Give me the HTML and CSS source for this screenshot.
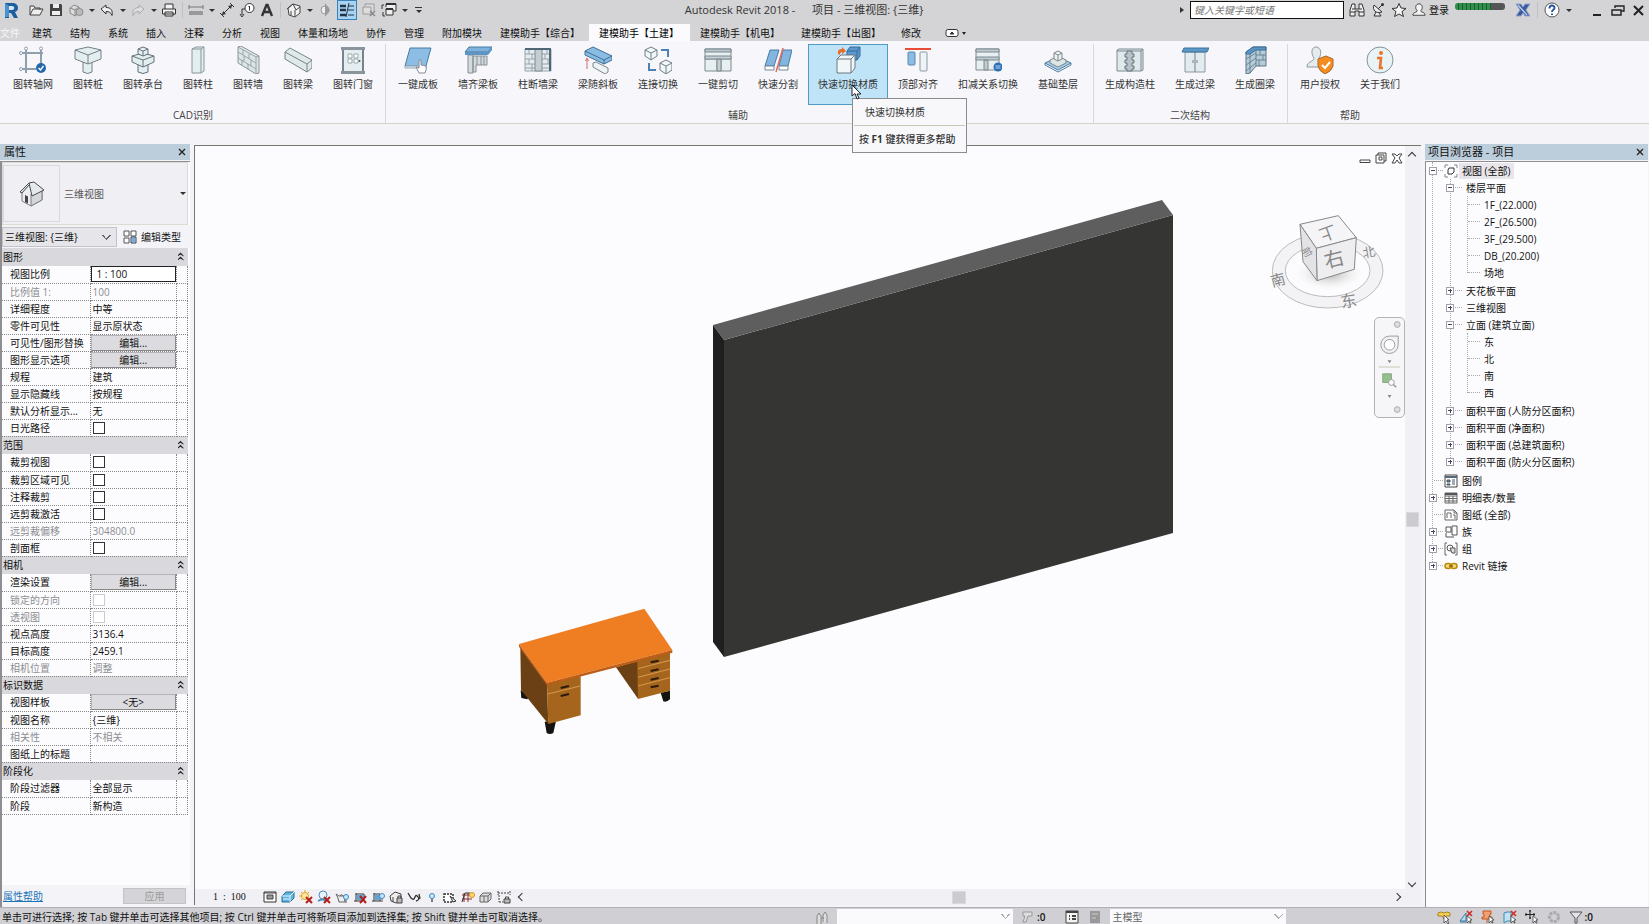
FILE: index.html
```html
<!DOCTYPE html>
<html lang="zh-CN">
<head>
<meta charset="utf-8">
<title>Autodesk Revit 2018 - 项目 - 三维视图: {三维}</title>
<link rel="stylesheet" href="styles.css">
</head>
<body>
<header class="titlebar">
  <div class="quick">
    <button class="ic logo" aria-label="Revit"><svg viewBox="0 0 16 16"><path d="M2 1h7c4 0 6 2 6 5 0 2-1 3-3 4l3 6h-4l-3-5H6v5H2z" fill="#1f5e9e"/><path d="M6 4v4h3c3 0 3-4 0-4z" fill="#d6e6f4"/><path d="M2 1l4 3v11H2z" fill="#4a92cf"/></svg></button>
    <button class="ic" aria-label="打开"><svg viewBox="0 0 16 16"><path d="M2 13V4h4l1 2h5v2M2 13l3-6h10l-3 6z" fill="#eee" stroke="#444"/></svg></button>
    <button class="ic" aria-label="保存"><svg viewBox="0 0 16 16"><path d="M2 2h11l1 1v11H2z" fill="#444"/><path d="M5 2h6v4H5zM4 9h8v4H4z" fill="#eee"/></svg></button>
    <button class="ic" aria-label="同步"><svg viewBox="0 0 16 16"><path d="M2 6l4-3 5 2v6l-4 3-5-3zM2 6l5 2 4-3M7 8v6" fill="#ddd" stroke="#888"/><circle cx="11.500" cy="10" r="3.500" fill="#bbb" stroke="#888"/></svg></button>
    <i class="caret"></i>
    <button class="ic" aria-label="放弃"><svg viewBox="0 0 16 16"><path d="M2 7l5-4v2.500c5 0 7 3 6 8-1-3-3-4-6-4V12z" fill="#eee" stroke="#333"/></svg></button>
    <i class="caret"></i>
    <button class="ic" aria-label="重做"><svg viewBox="0 0 16 16"><path d="M14 7L9 3v2.500c-5 0-7 3-6 8 1-3 3-4 6-4V12z" fill="#ddd" stroke="#aaa"/></svg></button>
    <i class="caret"></i>
    <button class="ic" aria-label="打印"><svg viewBox="0 0 16 16"><path d="M4 7V2h8v5M1.500 7h13v5h-13zM4 10h8v4H4z" fill="#f2f2f2" stroke="#333"/></svg></button>
    <i class="sep"></i>
    <button class="ic" aria-label="测量"><svg viewBox="0 0 16 16"><path d="M1 5h14M1 3v4M15 3v4" stroke="#777" fill="none"/><path d="M1 9h14v4H1z" fill="#999"/></svg></button>
    <i class="caret"></i>
    <button class="ic" aria-label="对齐尺寸标注"><svg viewBox="0 0 16 16"><path d="M3 13L13 3M1 11l4 4M11 1l4 4" stroke="#333" fill="none"/><path d="M3 13l1-4 3 3zM13 3l-1 4-3-3z" fill="#333"/></svg></button>
    <button class="ic" aria-label="按类别标记"><svg viewBox="0 0 16 16"><circle cx="10.500" cy="6" r="4.500" fill="#fff" stroke="#333"/><path d="M9.500 5l1-1v4.500M6 7H3v6M1 12l2 3 2-3" stroke="#333" fill="none"/></svg></button>
    <button class="ic" aria-label="文字"><svg viewBox="0 0 16 16"><path d="M3 14L7.500 3h1L13 14M5 10h6" fill="none" stroke="#333" stroke-width="2.400"/></svg></button>
    <i class="sep"></i>
    <button class="ic" aria-label="默认三维视图"><svg viewBox="0 0 16 16"><path d="M2 6l5-4 7 2v7l-5 4-6-2z" fill="#f2f2f2" stroke="#444"/><path d="M1 7l6-5 3 6M10 8l4-3M9 8v6M5 9v4" stroke="#444" fill="none"/></svg></button>
    <i class="caret"></i>
    <button class="ic" aria-label="剖面"><svg viewBox="0 0 16 16"><circle cx="8" cy="8" r="4" fill="#eee" stroke="#999"/><path d="M8 1v14l5-7z" fill="#999"/></svg></button>
    <button class="ic on" aria-label="细线"><svg viewBox="0 0 16 16"><path d="M1 4h6M1 8h6M1 13h6" stroke="#234" stroke-width="2.400"/><path d="M9 4h6M9 8h6M9 13h6M10 1L7 15" stroke="#234"/></svg></button>
    <button class="ic" aria-label="关闭隐藏窗口"><svg viewBox="0 0 16 16"><path d="M4 4V2h9v7M2 5h8v7H2z" fill="#ddd" stroke="#999"/><path d="M9 9l5 5M14 9l-5 5" stroke="#888" stroke-width="1.500"/></svg></button>
    <button class="ic" aria-label="切换窗口"><svg viewBox="0 0 16 16"><path d="M5 5V2h10v7h-3M5 7h7v6H5z" fill="#eee" stroke="#333"/><path d="M5 2h10M5 7h7" stroke="#333" stroke-width="2"/><path d="M1 7V3h2M2 10v4h2" stroke="#333" fill="none"/></svg></button>
    <i class="caret"></i>
    <i class="caret bar"></i>
  </div>
  <h1>Autodesk Revit 2018 - &emsp;&nbsp;项目 - 三维视图: {三维}</h1>
  <div class="account">
    <i class="caret right"></i>
    <input class="search" type="text" placeholder="键入关键字或短语" aria-label="搜索">
    <button class="ic" aria-label="查找"><svg viewBox="0 0 16 16"><path d="M3 2h3v5h4V2h3l2 6v6h-5V9H6v5H1V8zM3 7h3M10 7h3M1 10h5M10 10h5" fill="#eee" stroke="#333"/></svg></button>
    <button class="ic" aria-label="通讯中心"><svg viewBox="0 0 16 16"><path d="M4 3c-2 5 2 9 8 7zM8 7l4-4M6 10l-2 4h7l-2-3" fill="#eee" stroke="#333"/><circle cx="12.500" cy="2.500" r="1.500" fill="#333"/></svg></button>
    <button class="ic" aria-label="收藏夹"><svg viewBox="0 0 16 16"><path d="M8 1.500l2 4.500 5 .5-4 3 1.500 5L8 12l-4.500 2.500L5 9.500l-4-3L6 6z" fill="#f4f4f4" stroke="#333"/></svg></button>
    <button class="login"><svg viewBox="0 0 16 16"><path d="M6 9C3 6 4 1 8 1s5 5 2 8c0 2 5 1 5 5H1c0-4 5-3 5-5z" fill="#f4f4f4" stroke="#333"/></svg>登录</button>
    <span class="progress" role="img" aria-label="进度"></span>
    <button class="ic" aria-label="Exchange"><svg viewBox="0 0 16 16"><path d="M1 2h5l2 3 2-3h5l-4 6 4 6h-5l-2-3-2 3H1l4-6z" fill="#3c5a9a" stroke="#8ea3d0"/><path d="M3 3l9 10" stroke="#b9c8ea" stroke-width="1.500"/></svg></button>
    <i class="sep"></i>
    <button class="ic" aria-label="帮助"><svg viewBox="0 0 16 16"><circle cx="8" cy="8" r="7" fill="#fff" stroke="#555"/><path d="M5.500 6.500c0-4 5-3.500 5-.8C10.500 8 8 7.500 8 10M8 11.500v1.500" stroke="#2a55a0" stroke-width="2" fill="none"/></svg></button>
    <i class="caret"></i>
    <button class="ic win first" aria-label="最小化"><svg viewBox="0 0 16 16"><path d="M4 13h8" stroke="#222" stroke-width="2"/></svg></button>
    <button class="ic win" aria-label="还原"><svg viewBox="0 0 16 16"><path d="M5 6V4h9v5h-3M2 8h9v5H2z" fill="none" stroke="#222" stroke-width="1.400"/></svg></button>
    <button class="ic win" aria-label="关闭"><svg viewBox="0 0 16 16"><path d="M3 4l9 9M12 4l-9 9" stroke="#222" stroke-width="2"/></svg></button>
  </div>
</header>

<nav class="tabs">
  <button class="file">文件</button><button>建筑</button><button>结构</button><button>系统</button><button>插入</button><button>注释</button><button>分析</button><button>视图</button><button>体量和场地</button><button>协作</button><button>管理</button><button>附加模块</button><button>建模助手【综合】</button><button class="wide active">建模助手【土建】</button><button class="wide">建模助手【机电】</button><button class="wide">建模助手【出图】</button><button>修改</button>
  <button class="mini" aria-label="最小化功能区"><svg viewBox="0 0 22 10"><rect x="1" y="1.500" width="12" height="7" rx="2" fill="#fff" stroke="#333"/><path d="M5 6l2-2 2 2z" fill="#333" stroke="#333"/><path d="M17 4h4l-2 3z" fill="#222"/></svg></button>
</nav>

<section class="ribbon">
  <div class="group">
    <div class="tools">
      <button class="tool"><svg viewBox="0 0 28 28"><g stroke="#8fa0aa" stroke-width="2" fill="#fff"><path d="M7 2v25M22 2v16M2 7h22M2 23h15"/><circle cx="7" cy="2.500" r="1.500" stroke-width="1"/><circle cx="22" cy="2.500" r="1.500" stroke-width="1"/><circle cx="2" cy="7" r="1.500" stroke-width="1"/><circle cx="2" cy="23" r="1.500" stroke-width="1"/></g><circle cx="22" cy="22" r="5" fill="#2468ac"/><path d="M19.500 22l2 2 3-4" stroke="#fff" stroke-width="1.400" fill="none"/></svg>图转轴网</button>
      <button class="tool"><svg viewBox="0 0 28 28"><g fill="#e3eef0" stroke="#748086"><path d="M9 16v10q5 3 9 0V16z"/><path d="M1 4l13-3 13 3v9l-13 5L1 13z"/><path d="M1 4l13 5 13-5M14 9v9" fill="none"/></g></svg>图转桩</button>
      <button class="tool"><svg viewBox="0 0 28 28"><g fill="#e3eef0" stroke="#65727a"><path d="M9 17v9q5 3 10 0v-9z"/><path d="M3 10l11-3 11 3v6l-11 5-11-5z"/><path d="M3 10l11 4 11-4M14 14v7" fill="none"/><path d="M9 3l5-2 5 2v5l-5 2-5-2zM9 3l5 2 5-2M14 5v5"/></g></svg>图转承台</button>
      <button class="tool"><svg viewBox="0 0 28 28"><g fill="#e3eef0" stroke="#89959b"><path d="M8 3l4-2h8v24l-3 2H8z"/><path d="M8 3h9l3-2M17 3v24" fill="none"/></g></svg>图转柱</button>
      <button class="tool"><svg viewBox="0 0 28 28"><g fill="#dce6e8" stroke="#89959b"><path d="M4 1l3-1 18 10v17l-3 1L4 17z"/><path d="M4 1l18 10v17M22 11l3-1M4 6l18 11M4 12l18 11M9 4v5M15 8v5M10 10v5M17 14v6M8 14v5M14 18v5" fill="none" stroke-width=".8"/></g></svg>图转墙</button>
      <button class="tool"><svg viewBox="0 0 28 28"><g fill="#dfe9ea" stroke="#76848a"><path d="M1 6l5-4 22 12v8l-5 4L1 13z"/><path d="M1 6l22 12 5-4M23 18v8" fill="none"/></g></svg>图转梁</button>
      <button class="tool"><svg viewBox="0 0 28 28"><path d="M4 3h20v23H4z" fill="#e6edf0" stroke="#76848e" stroke-width="2"/><path d="M2 1h24v3H2zM2 25h24v3H2z" fill="#8a949c"/><path d="M9 8h4v4H9zM15 8h4v4h-4zM9 13h4v4H9zM15 13h4v4h-4z" fill="#fff" stroke="#9aa"/><circle cx="20.500" cy="15" r="1" fill="#456"/></svg>图转门窗</button>
    </div>
    <div class="label">CAD识别</div>
  </div>
  <div class="group assist">
    <div class="tools">
      <button class="tool"><svg viewBox="0 0 28 28"><path d="M6 2h21l-5 18H1z" fill="#8cbde4" stroke="#4a7aa0"/><path d="M1 20h21v2H1z" fill="#dfe9ee" stroke="#9ab"/><path d="M15 14q2-1 2 1v4l5 1q1 3-1 7h-6l-3-6 3 1z" fill="#fff" stroke="#889"/></svg>一键成板</button>
      <button class="tool"><svg viewBox="0 0 28 28"><path d="M4 9h5v18H4zM9 10h14v9H12v7H9z" fill="#d5dadd" stroke="#869098"/><path d="M13 10v9M17 10v9M20 10v9" stroke="#869098"/><path d="M5 1h23l-4 5H1z" fill="#7db2de" stroke="#4a7aa0"/><path d="M1 6h23l4-5v3l-4 5H1z" fill="#5d94c4"/></svg>墙齐梁板</button>
      <button class="tool"><svg viewBox="0 0 28 28"><path d="M1 3h26v22H1z" fill="#e4ecef" stroke="#98a4aa"/><path d="M1 8h26M1 13h26M1 18h26M1 22h26M5 3v5M8 8v5M5 13v5M23 3v5M21 8v5M24 13v5M8 18v7" stroke="#98a4aa"/><path d="M11 3h7v22h-7z" fill="#c3cdd2" stroke="#7f8c93"/><path d="M1 3h26M26 3v22" stroke="#4f6878" stroke-width="2"/></svg>柱断墙梁</button>
      <button class="tool"><svg viewBox="0 0 28 28"><path d="M1 5l8-4 19 9v4l-8 4L1 9z" fill="#8abbe2" stroke="#3f6f96"/><path d="M1 5l19 9 8-4M20 14v4" fill="none" stroke="#3f6f96"/><path d="M9 17l3-1 12 6v4l-3 2-12-7z" fill="#eef3f4" stroke="#77858c"/><path d="M3 23V13M1.500 15L3 12l1.500 3" stroke="#d36a6a" fill="none"/></svg>梁随斜板</button>
      <button class="tool"><svg viewBox="0 0 28 28"><g fill="#f2f6f7" stroke="#6f7f88"><path d="M1 4l6-3 6 3v6l-6 4-6-4zM1 4l6 3 6-3M7 7v7"/><path d="M16 17l6-3 6 3v7l-6 4-6-4zM16 17l6 3 6-3M22 20v8"/></g><path d="M17 4h7v7M5 17v7h7" stroke="#4c81b4" stroke-width="2" fill="none"/></svg>连接切换</button>
      <button class="tool"><svg viewBox="0 0 28 28"><path d="M1 3h26v22H1z" fill="#e8eff1" stroke="#7c8a91"/><path d="M1 3h26v3H1z" fill="#b8c5cb" stroke="#7c8a91"/><path d="M1 13h26M13 13v12M17 13v12" stroke="#7c8a91"/><path d="M1 10h26v3H1zM13 13h4v12h-4z" fill="#c5cfd4" stroke="#7c8a91"/></svg>一键剪切</button>
      <button class="tool"><svg viewBox="0 0 28 28"><path d="M6 4h9l-5 16H1zM19 4h9l-4 16h-9z" fill="#82b5df" stroke="#4a7ba4"/><path d="M1 20h9v4H1zM15 20h9v4h-9z" fill="#fff" stroke="#789"/><path d="M19 2l-7 24" stroke="#df6d5c" stroke-width="1.500"/></svg>快速分割</button>
      <div class="hot">
        <button class="tool selected"><svg viewBox="0 0 28 28"><path d="M13 5l3-4h10v9l-3 4H13z" fill="#5d98ce" stroke="#376a98"/><path d="M13 5h10l3-4M23 5v9" fill="none" stroke="#376a98"/><path d="M3 13l4-4h14v13l-4 5H3z" fill="#f1f6f8" stroke="#6b7a82"/><path d="M3 13h14l4-4M17 13v14" fill="none" stroke="#6b7a82"/><path d="M4 8q-1-5 4-5V1l4 4-4 3V6q-2 0-2 3z" fill="#ea6b2a"/></svg>快速切换材质</button>
        <div class="tooltip" role="tooltip"><p>快速切换材质</p><p class="f1">按 <b>F1</b> 键获得更多帮助</p></div>
        <svg class="cursor" viewBox="0 0 11 16"><path d="M1 1v11l3-2.500L6 15l2-1-2-4h4z" fill="#fff" stroke="#222"/></svg>
      </div>
      <button class="tool"><svg viewBox="0 0 28 28"><path d="M1 3h26" stroke="#e84b36" stroke-width="2"/><rect x="4" y="6" width="7" height="13" rx="1" fill="#8bbce4" stroke="#5b88ac"/><rect x="16" y="6" width="7" height="19" rx="1" fill="#eef3f6" stroke="#8998a2"/></svg>顶部对齐</button>
      <button class="tool"><svg viewBox="0 0 28 28"><path d="M2 3h23v21H2z" fill="#e8eff1" stroke="#7c8a91"/><path d="M2 3h23v3H2zM2 11h23v3H2zM10 14h4v10h-4z" fill="#c0cbd0" stroke="#7c8a91"/><circle cx="24" cy="21" r="4.500" fill="#2c6fb4"/><path d="M21.500 20h5M21.500 22h5" stroke="#b9d5ef"/></svg>扣减关系切换</button>
      <button class="tool"><svg viewBox="0 0 28 28"><path d="M1 17l13-6 13 6-13 7z" fill="#a8cbe4" stroke="#4f7fa4"/><path d="M1 17v2l13 7 13-7v-2" fill="none" stroke="#4f7fa4"/><path d="M6 14l8-4 8 4v3l-8 4-8-4z" fill="#dfe5e6" stroke="#7b888e"/><path d="M10 7l4-2 4 2v6l-4 2-4-2zM10 7l4 2 4-2M14 9v6" fill="#eef1f1" stroke="#7b888e"/></svg>基础垫层</button>
    </div>
    <div class="label">辅助</div>
  </div>
  <div class="group second">
    <div class="tools">
      <button class="tool"><svg viewBox="0 0 28 28"><path d="M1 4l2-1h24v21l-2 1H1z" fill="#dfe8eb" stroke="#7c8a91"/><path d="M1 5h24v20M25 5l2-2" fill="none" stroke="#7c8a91"/><path d="M11 5h5v3h2v3h-2v3h2v3h-2v3h2v3h-2v2h-5v-2H9v-3h2v-3H9v-3h2v-3H9V8h2z" fill="#b6c2c8" stroke="#66747c"/></svg>生成构造柱</button>
      <button class="tool"><svg viewBox="0 0 28 28"><path d="M4 6h20v20H4z" fill="#e2ecef" stroke="#8b989e"/><path d="M14 6v20M12 14v3M16 14v3" stroke="#71808a"/><path d="M3 2h25l-2 4H1z" fill="#5b98c8" stroke="#3b7098"/></svg>生成过梁</button>
      <button class="tool"><svg viewBox="0 0 28 28"><path d="M5 6l7-5h13v19H15l-6 7-4 1z" fill="#b6ccd8" stroke="#5c7486"/><path d="M5 6l7-5h13v3H15L9 8H5z" fill="#5a94c2" stroke="#3b7098"/><path d="M15 4v16M9 8v19M15 9h10M15 14h10M5 13l10-6M5 19l10-7M5 25l10-8M19 4v5M22 9v5M18 14v6" stroke="#5c7486" fill="none" stroke-width=".8"/></svg>生成圈梁</button>
    </div>
    <div class="label">二次结构</div>
  </div>
  <div class="group last">
    <div class="tools">
      <button class="tool"><svg viewBox="0 0 28 28"><path d="M8 12C5 8 5 1 10 1s6 7 3 11c0 3 5 3 5 9H1c0-6 7-5 7-9z" fill="#e6ecee" stroke="#8d999f"/><path d="M12 13l8-3 7 3v7q-1 5-8 8-6-3-7-8z" fill="#f48c1e" stroke="#a5672e"/><path d="M16 19l3 3 5-6" stroke="#fff" stroke-width="2" fill="none"/></svg>用户授权</button>
      <button class="tool"><svg viewBox="0 0 28 28"><circle cx="14" cy="14" r="13" fill="#e9f2f4" stroke="#84939b"/><circle cx="15" cy="7" r="2" fill="#e9752b"/><path d="M11 12h4l-1 10h3" stroke="#e9752b" stroke-width="2.600" fill="none"/></svg>关于我们</button>
    </div>
    <div class="label">帮助</div>
  </div>
</section>
<div class="options"></div>

<main class="work">
  <aside class="props">
    <div class="ptitle">属性<button aria-label="关闭"><svg viewBox="0 0 8 8"><path d="M1 1l6 6M7 1L1 7" stroke="#222" stroke-width="1.300"/></svg></button></div>
    <div class="pbody">
      <button class="type">
        <span class="thumb"><svg viewBox="0 0 26 28"><path d="M3 12l8-9 12 6v11l-11 6-9-5z" fill="#ededf0" stroke="#7a7f84"/><path d="M12 14v12l11-6V9z" fill="#d4d7da" stroke="#7a7f84"/><path d="M10 3l5-1 10 8-12 6z" fill="#e6e9ec" stroke="#454b50"/><path d="M10 3L1 12l2 1 7-8" fill="#e6e9ec" stroke="#454b50"/><path d="M6 15l3 1.500v7L6 22z" fill="#444"/></svg></span>
        <span class="tname">三维视图</span><i class="caret"></i>
      </button>
      <div class="inst">
        <select aria-label="实例"><option>三维视图: {三维}</option></select>
        <button class="edit"><svg viewBox="0 0 14 14"><path d="M1 1h5v5H1zM8 1h5v5H8zM1 8h5v5H1z" fill="#fff" stroke="#555"/><path d="M8 7h5v6H8z" fill="#cfe0f2" stroke="#345"/><path d="M9 9h3M9 11h3" stroke="#27c"/></svg>编辑类型</button>
      </div>
      <table class="grid">
        <colgroup><col class="c1"><col><col class="c3"></colgroup>
        <tbody>
        <tr class="h"><th colspan="3"><span>图形</span><button aria-label="折叠图形"></button></th></tr>
        <tr><th>视图比例</th><td><input class="scale" type="text" value="1 : 100" aria-label="视图比例"></td><td></td></tr>
        <tr class="off"><th>比例值 1:</th><td>100</td><td></td></tr>
        <tr><th>详细程度</th><td>中等</td><td></td></tr>
        <tr><th>零件可见性</th><td>显示原状态</td><td></td></tr>
        <tr><th>可见性/图形替换</th><td><button class="cell">编辑...</button></td><td></td></tr>
        <tr><th>图形显示选项</th><td><button class="cell">编辑...</button></td><td></td></tr>
        <tr><th>规程</th><td>建筑</td><td></td></tr>
        <tr><th>显示隐藏线</th><td>按规程</td><td></td></tr>
        <tr><th>默认分析显示...</th><td>无</td><td></td></tr>
        <tr><th><label for="k1">日光路径</label></th><td><input type="checkbox" id="k1"></td><td></td></tr>
        <tr class="h"><th colspan="3"><span>范围</span><button aria-label="折叠范围"></button></th></tr>
        <tr><th><label for="k2">裁剪视图</label></th><td><input type="checkbox" id="k2"></td><td></td></tr>
        <tr><th><label for="k3">裁剪区域可见</label></th><td><input type="checkbox" id="k3"></td><td></td></tr>
        <tr><th><label for="k4">注释裁剪</label></th><td><input type="checkbox" id="k4"></td><td></td></tr>
        <tr><th><label for="k5">远剪裁激活</label></th><td><input type="checkbox" id="k5"></td><td></td></tr>
        <tr class="off"><th>远剪裁偏移</th><td>304800.0</td><td></td></tr>
        <tr><th><label for="k6">剖面框</label></th><td><input type="checkbox" id="k6"></td><td></td></tr>
        <tr class="h"><th colspan="3"><span>相机</span><button aria-label="折叠相机"></button></th></tr>
        <tr><th>渲染设置</th><td><button class="cell">编辑...</button></td><td></td></tr>
        <tr class="off"><th><label for="k7">锁定的方向</label></th><td><input type="checkbox" id="k7" disabled></td><td></td></tr>
        <tr class="off"><th><label for="k8">透视图</label></th><td><input type="checkbox" id="k8" disabled></td><td></td></tr>
        <tr><th>视点高度</th><td>3136.4</td><td></td></tr>
        <tr><th>目标高度</th><td>2459.1</td><td></td></tr>
        <tr class="off"><th>相机位置</th><td>调整</td><td></td></tr>
        <tr class="h"><th colspan="3"><span>标识数据</span><button aria-label="折叠标识数据"></button></th></tr>
        <tr><th>视图样板</th><td><button class="cell">&lt;无&gt;</button></td><td></td></tr>
        <tr><th>视图名称</th><td>{三维}</td><td></td></tr>
        <tr class="off"><th>相关性</th><td>不相关</td><td></td></tr>
        <tr><th>图纸上的标题</th><td></td><td></td></tr>
        <tr class="h"><th colspan="3"><span>阶段化</span><button aria-label="折叠阶段化"></button></th></tr>
        <tr><th>阶段过滤器</th><td>全部显示</td><td></td></tr>
        <tr><th>阶段</th><td>新构造</td><td></td></tr>
        </tbody>
      </table>
    </div>
    <div class="pfoot"><a href="#help">属性帮助</a><button disabled>应用</button></div>
  </aside>

  <section class="view">
    <div class="canvas">
      <svg class="scene" viewBox="195 146 1210 743" preserveAspectRatio="xMinYMin meet">
        <defs><radialGradient id="sh"><stop offset="0" stop-color="#999" stop-opacity=".8"/><stop offset="1" stop-color="#fff" stop-opacity="0"/></radialGradient></defs>
        <path d="M724 340L1173 215V533L724 657z" fill="#353533"/>
        <path d="M713 325L1162 200l11 15L724 340z" fill="#5e5e5e"/>
        <path d="M713 325l11 15v317l-11-15z" fill="#1f1f1f"/>
        <g transform="translate(500 590) scale(.3333)">
          <path d="M62 300l25 20-5 8-18-4zM134 395l34-2-8 36q-10 6-20 0zM482 308l28-6v26q-10 10-20 6z" fill="#15130f"/>
          <path d="M61 172l80 108 4 122-82-102z" fill="#6b4014"/>
          <path d="M141 282l101-24v118l-97 26z" fill="#a5651d"/>
          <path d="M348 232l66-20v114z" fill="#6b4014"/>
          <path d="M412 212l98-26v116l-96 25z" fill="#a5651d"/>
          <path d="M143 312l98-24M414 236l96-25M414 262l96-25M414 288l96-25" stroke="#d79a4e" stroke-width="3"/>
          <path d="M182 294l25-6M182 318l25-6M452 217l24-5M452 243l24-5M452 269l24-5M452 292l24-5" stroke="#2a1a0c" stroke-width="6"/>
          <path d="M57 162L433 56l84 124-376 98z" fill="#ef7d22"/>
          <path d="M57 162l84 116 376-98v8l-376 98L57 170z" fill="#bd5d16"/>
        </g>
        <g transform="translate(1240 150) scale(.3333)">
          <path fill-rule="evenodd" d="M97 362a166 112 0 1 0 332 0a166 112 0 1 0-332 0zM136 362a127 78 0 1 0 254 0a127 78 0 1 0-254 0z" fill="#f3f3f6" stroke="#bbb" stroke-width="3"/>
          <ellipse cx="268" cy="370" rx="110" ry="55" fill="url(#sh)"/>
          <g stroke="#888" stroke-width="3" stroke-linejoin="round"><path d="M180 223l115-26 54 66-120 32z" fill="#f5f5f7"/><path d="M229 295l120-32-6 95-112 34z" fill="#eeeef1"/><path d="M180 223l49 72 2 97-42-57z" fill="#e3e3e7"/></g>
          <g fill="#888" font-size="50"><text x="252" y="348" transform="rotate(-14 282 328)" font-size="60">右</text><text x="236" y="268" transform="rotate(160 262 250)">上</text><text x="190" y="318" transform="rotate(60 204 304)" font-size="30">前</text><text x="92" y="406" transform="rotate(-15 114 390)" font-size="44">南</text><text x="302" y="470" transform="rotate(-10 328 452)" font-size="48">东</text><text x="368" y="320" transform="rotate(-10 390 306)" font-size="38">北</text></g>
        </g>
      </svg>
      <div class="mdi">
        <button aria-label="最小化视图"><svg viewBox="0 0 12 12"><path d="M1 8h10v2.500H1z" fill="#fff" stroke="#444"/></svg></button>
        <button aria-label="还原视图"><svg viewBox="0 0 12 12"><path d="M3 3V1h8v8H9M1 3h8v8H1z" fill="#fff" stroke="#444"/><path d="M4 5h3v3H4z" fill="none" stroke="#444"/></svg></button>
        <button aria-label="关闭视图"><svg viewBox="0 0 12 12"><path d="M1 2h3l2 2 2-2h3L8 6l3 5H8L6 8l-2 3H1l3-5z" fill="#fff" stroke="#444"/></svg></button>
      </div>
      <div class="navbar">
        <svg viewBox="0 0 30 101"><g fill="none" stroke="#aaa"><circle cx="23" cy="6" r="3" fill="#ddd"/><circle cx="23" cy="94" r="3" fill="#ddd"/><path d="M15 18h9v9a9 9 0 1 1-9-9z" fill="#f2f2f4" stroke="#999"/><circle cx="15" cy="27" r="5.500" fill="#fff" stroke="#999"/><path d="M4 50h22" stroke="#c8c8b4"/></g><path d="M13 43h4l-2 3zM13 79h4l-2 3z" fill="#888"/><path d="M8 57h9v9H8z" fill="#94c08e" stroke="#86a882"/><circle cx="17" cy="66" r="3" fill="#fff" stroke="#999"/><path d="M19 68l3 3" stroke="#999" stroke-width="1.500"/></svg>
      </div>
    </div>
    <div class="vscroll"><i class="chev up"></i><i class="thumb"></i><i class="chev down"></i></div>
    <div class="vcb">
      <span class="sc">1&ensp;:&ensp;100</span>
      <div class="vicons">
        <button aria-label="详细程度"><svg viewBox="0 0 14 14"><path d="M1 2h12v10H1z" fill="#fff" stroke="#333"/><path d="M1 3h12M4 5h6v4H4z" fill="#999" stroke="#444"/></svg></button>
        <button aria-label="视觉样式"><svg viewBox="0 0 14 14"><path d="M1 6l4-4h8v6l-4 4H1z" fill="#5fb4e0" stroke="#2a6a90"/><path d="M1 6h8l4-4M9 6v6M2 9h6" fill="none" stroke="#e8f6ff"/></svg></button>
        <button aria-label="日光路径"><svg viewBox="0 0 14 14"><circle cx="6" cy="6" r="3.500" fill="#ffe9a0" stroke="#e0a020"/><path d="M6 0v2M0 6h2M2 2l1 1M2 10l1-1M10 2L9 3" stroke="#e0a020"/><path d="M7 7l6 6M13 7l-6 6" stroke="#b3201c" stroke-width="2"/></svg></button>
        <button aria-label="阴影"><svg viewBox="0 0 14 14"><circle cx="6" cy="5" r="4" fill="#e8f4fc" stroke="#4a8dbb"/><path d="M1 11q5-3 8 0" stroke="#4a8dbb" stroke-width="2" fill="none"/><path d="M7 7l6 6M13 7l-6 6" stroke="#b3201c" stroke-width="2"/></svg></button>
        <button aria-label="渲染"><svg viewBox="0 0 14 14"><path d="M1 4l3 2h5l1 6H4L3 8zM5 6q1-3 3 0" fill="#eee" stroke="#666"/><circle cx="11" cy="7" r="2.500" fill="#c8e6fa" stroke="#3c8cc4"/><path d="M11 10v3" stroke="#555"/></svg></button>
        <button aria-label="裁剪视图"><svg viewBox="0 0 14 14"><path d="M1 11h9M3 3v8M3 4h8v7" fill="none" stroke="#333"/><path d="M4 5h7v5H4z" fill="#58a6dc"/><path d="M7 6l6 7M13 6l-6 7" stroke="#b3201c" stroke-width="2"/></svg></button>
        <button aria-label="显示裁剪区域"><svg viewBox="0 0 14 14"><path d="M1 11h9M3 3v8M3 4h6v7" fill="none" stroke="#333"/><path d="M4 5h4v5H4z" fill="#58a6dc"/><circle cx="11" cy="6" r="2.500" fill="#c8e6fa" stroke="#3c8cc4"/><path d="M11 9v3" stroke="#555"/></svg></button>
        <button aria-label="锁定三维视图"><svg viewBox="0 0 14 14"><path d="M1 6l5-4 6 2v7l-5 2-5-2zM4 12V7" fill="#eee" stroke="#444"/><path d="M8 8h5v5H8z" fill="#bbb" stroke="#444"/><path d="M9 8V6h3v2" fill="none" stroke="#444"/></svg></button>
        <button aria-label="临时隐藏"><svg viewBox="0 0 14 14"><path d="M1 3l3 5q3 3 4-1 1-3 3 0t-2 4M12 4l1 5" fill="none" stroke="#333" stroke-width="1.300"/></svg></button>
        <button aria-label="显示隐藏图元"><svg viewBox="0 0 14 14"><circle cx="7" cy="6" r="2.500" fill="#c8e6fa" stroke="#3c8cc4"/><path d="M7 9v3" stroke="#555" stroke-width="1.500"/></svg></button>
        <button aria-label="临时视图属性"><svg viewBox="0 0 14 14"><path d="M1 4h9v8H1z" fill="#fff" stroke="#333" stroke-width="1.500" stroke-dasharray="2 1"/><path d="M7 6l6 5-3 1z" fill="#fff" stroke="#333"/></svg></button>
        <button aria-label="分析模型"><svg viewBox="0 0 14 14"><path d="M1 5h10M1 9h10M3 3v9M7 3v9" stroke="#8b2f2a" fill="none"/><path d="M1 12l3-9h5" stroke="#333" fill="none"/><circle cx="11" cy="5" r="2.500" fill="#ffd873" stroke="#dd9420"/></svg></button>
        <button aria-label="位移集"><svg viewBox="0 0 14 14"><path d="M1 6l3-3h8v6l-3 3H1zM1 6h8v6M9 6l3-3M5 6v6" fill="#ddd" stroke="#666"/></svg></button>
        <button aria-label="约束"><svg viewBox="0 0 14 14"><path d="M1 3h12M1 1v4M13 1v4M2 5v7M2 12h4" stroke="#444" stroke-dasharray="2 1" fill="none"/><path d="M7 9h6v4H7z" fill="#bbb" stroke="#444"/><path d="M8.500 9V7h3v2" stroke="#444" fill="none"/></svg></button>
        <i class="chev left"></i>
      </div>
      <div class="hscroll"><i class="thumb"></i><i class="chev rightward"></i></div>
    </div>
  </section>

  <aside class="browser">
    <div class="ptitle">项目浏览器 - 项目<button aria-label="关闭"><svg viewBox="0 0 8 8"><path d="M1 1l6 6M7 1L1 7" stroke="#222" stroke-width="1.300"/></svg></button></div>
    <div class="tbody">
      <ul class="l1">
        <li><div class="row"><button class="exp" aria-label="折叠"></button><i class="dash"></i><svg viewBox="0 0 14 14"><path d="M4 1H1v3M10 1h3v3M4 13H1v-3M10 13h3v-3" fill="none" stroke="#888"/><path d="M5 4h5v4l-2 2H4V6z" fill="#fff" stroke="#333"/></svg><span class="cur">视图 (全部)</span></div>
          <ul class="l2">
            <li><div class="row"><button class="exp" aria-label="折叠"></button><i class="dash"></i><span>楼层平面</span></div>
              <ul class="l3"><li><div class="row"><i class="dash"></i><span>1F_(22.000)</span></div></li><li><div class="row"><i class="dash"></i><span>2F_(26.500)</span></div></li><li><div class="row"><i class="dash"></i><span>3F_(29.500)</span></div></li><li><div class="row"><i class="dash"></i><span>DB_(20.200)</span></div></li><li><div class="row"><i class="dash"></i><span>场地</span></div></li></ul></li>
            <li><div class="row"><button class="exp plus" aria-label="展开"></button><i class="dash"></i><span>天花板平面</span></div></li>
            <li><div class="row"><button class="exp plus" aria-label="展开"></button><i class="dash"></i><span>三维视图</span></div></li>
            <li><div class="row"><button class="exp" aria-label="折叠"></button><i class="dash"></i><span>立面 (建筑立面)</span></div>
              <ul class="l3"><li><div class="row"><i class="dash"></i><span>东</span></div></li><li><div class="row"><i class="dash"></i><span>北</span></div></li><li><div class="row"><i class="dash"></i><span>南</span></div></li><li><div class="row"><i class="dash"></i><span>西</span></div></li></ul></li>
            <li><div class="row"><button class="exp plus" aria-label="展开"></button><i class="dash"></i><span>面积平面 (人防分区面积)</span></div></li>
            <li><div class="row"><button class="exp plus" aria-label="展开"></button><i class="dash"></i><span>面积平面 (净面积)</span></div></li>
            <li><div class="row"><button class="exp plus" aria-label="展开"></button><i class="dash"></i><span>面积平面 (总建筑面积)</span></div></li>
            <li><div class="row"><button class="exp plus" aria-label="展开"></button><i class="dash"></i><span>面积平面 (防火分区面积)</span></div></li>
          </ul></li>
        <li><div class="row leaf"><i class="dash"></i><svg viewBox="0 0 14 14"><path d="M1 1h12v12H1z" fill="#fff" stroke="#444"/><path d="M1 2h12v2H1z" fill="#567"/><path d="M3 6h3v2H3zM3 10h3v1H3zM8 6h3M8 8h3M8 10h3" fill="#789" stroke="#456"/></svg><span>图例</span></div></li>
        <li><div class="row"><button class="exp plus" aria-label="展开"></button><i class="dash"></i><svg viewBox="0 0 14 14"><path d="M1 2h12v10H1zM1 5h12M1 7.500h12M1 10h12M5 5v7M9 5v7" fill="#fff" stroke="#666"/><path d="M1 2h12v2H1z" fill="#555"/></svg><span>明细表/数量</span></div></li>
        <li><div class="row leaf"><i class="dash"></i><svg viewBox="0 0 14 14"><path d="M1 2h9l3 3v7H1z" fill="#fff" stroke="#666"/><path d="M3 10V5h4v5M9 7h2v4M10 2v3h3" fill="none" stroke="#666"/></svg><span>图纸 (全部)</span></div></li>
        <li><div class="row"><button class="exp plus" aria-label="展开"></button><i class="dash"></i><svg viewBox="0 0 14 14"><path d="M2 2h5v5H2zM8 1h5v9H8zM2 8v4h8" fill="#fff" stroke="#555"/></svg><span>族</span></div></li>
        <li><div class="row"><button class="exp plus" aria-label="展开"></button><i class="dash"></i><svg viewBox="0 0 14 14"><path d="M3 1H1v12h2M11 1h2v12h-2" fill="none" stroke="#666"/><circle cx="6" cy="6" r="3" fill="#fff" stroke="#555"/><path d="M6 6h5v5H8z" fill="#ddd" stroke="#555"/></svg><span>组</span></div></li>
        <li><div class="row"><button class="exp plus" aria-label="展开"></button><i class="dash"></i><svg viewBox="0 0 14 14"><rect x="1" y="4.500" width="6" height="5" rx="2.500" fill="#f6d77a" stroke="#b88a10" stroke-width="1.500"/><rect x="7" y="4.500" width="6" height="5" rx="2.500" fill="#f6d77a" stroke="#b88a10" stroke-width="1.500"/><path d="M5 7h4" stroke="#8a6608" stroke-width="1.500"/></svg><span>Revit 链接</span></div></li>
      </ul>
    </div>
  </aside>
</main>

<footer class="status">
  <p>单击可进行选择; 按 Tab 键并单击可选择其他项目; 按 Ctrl 键并单击可将新项目添加到选择集; 按 Shift 键并单击可取消选择。</p>
  <div class="sets">
    <svg viewBox="0 0 14 14"><path d="M2 14V6l2-3 2 3v8M8 12V5l2-3 2 3v8M6 8h3" fill="#ddd" stroke="#888"/></svg>
    <select aria-label="工作集"><option></option></select>
    <svg viewBox="0 0 14 14"><path d="M2 2h9v4H7l-2 6H2l2-6H2z" fill="#ddd" stroke="#999"/></svg><span>:0</span>
    <svg class="gap" viewBox="0 0 14 14"><path d="M1 1h12v12H1z" fill="#f4f4f4" stroke="#444"/><path d="M1 2h12M4 6h1M7 6h4M4 9h1M7 9h4" stroke="#444" stroke-width="2"/></svg>
    <svg class="gap2" viewBox="0 0 14 14"><path d="M2 1h10v12H2z" fill="#999"/><path d="M4 4h6M4 8h4" stroke="#ccc"/></svg>
    <select aria-label="设计选项"><option>主模型</option></select>
  </div>
  <div class="flags">
    <svg viewBox="0 0 14 14"><path d="M1 3q3-2 6 0 3-2 6 0v3H9L7 9 5 6H1z" fill="#f3cf52" stroke="#a9862a"/><path d="M7 5v8l2-2 2 3 1-1-2-3h2z" fill="#fff" stroke="#444" stroke-width=".8"/></svg>
    <svg viewBox="0 0 14 14"><path d="M1 11l6-8v8zM1 12h6" fill="#bcdcf0" stroke="#3a7aa8"/><path d="M8 1l5 5M13 1L8 6" stroke="#d02a24" stroke-width="1.600"/><path d="M8 6v7l2-2 1 2h1l-1-3h2z" fill="#fff" stroke="#444" stroke-width=".8"/></svg>
    <svg viewBox="0 0 14 14"><path d="M2 1h8v3H9v3h2v2H1V7h2V4H2zM6 9v4" fill="#f0a070" stroke="#c4561c"/><path d="M8 6v7l2-2 1 2h1l-1-3h2z" fill="#fff" stroke="#444" stroke-width=".8"/></svg>
    <svg viewBox="0 0 14 14"><path d="M1 3l3-1h4v9H4l-3 2z" fill="#bfe2f4" stroke="#3a8ab4"/><path d="M8 1l5 5M13 1L8 6" stroke="#d02a24" stroke-width="1.600"/><path d="M8 6v7l2-2 1 2h1l-1-3h2z" fill="#fff" stroke="#444" stroke-width=".8"/></svg>
    <svg viewBox="0 0 14 14"><path d="M5 0v9M0 4.500h10M4 1h2M4 8h2M1 3v3M9 3v3" stroke="#222"/><path d="M8 6v7l2-2 1 2h1l-1-3h2z" fill="#fff" stroke="#444" stroke-width=".8"/></svg>
    <svg viewBox="0 0 14 14"><circle cx="7" cy="7" r="4.500" fill="none" stroke="#aaa" stroke-width="3" stroke-dasharray="3 1"/></svg>
    <svg viewBox="0 0 14 14"><path d="M1 2h12L8 8v5H6V8z" fill="#e4e4e8" stroke="#555"/></svg><span>:0</span>
  </div>
</footer>
</body>
</html>
```
FILE: styles.css
```css
* { box-sizing: border-box; }
body {
  margin: 0;
  height: 100vh;
  display: flex;
  flex-direction: column;
  overflow: hidden;
  background: #f4f4f8;
  color: #111;
  font: 10px/16px "Open Sans", "Noto Sans CJK SC", sans-serif;
}
button, input, select { font: inherit; color: inherit; margin: 0; padding: 0; border: 0; background: none; border-radius: 0; }
button { white-space: nowrap; }
svg { display: block; flex: none; }
ul, p, h1 { margin: 0; padding: 0; }
ul { list-style: none; }

.titlebar { display: flex; align-items: center; height: 20px; flex: none; background: #d4d4d6; }
.quick, .account { display: flex; align-items: center; gap: 4px; flex: none; }
.quick { padding-left: 3px; }
.ic { width: 16px; height: 16px; flex: none; }
.ic svg { width: 16px; height: 16px; }
.logo { margin-right: 5px; }
.ic.on { width: 20px; height: 20px; padding: 0 1px; background: #a9d3f3; border: 1px solid #3b7fb8; }
.caret { width: 7px; flex: none; display: block; }
.caret::before { content: ""; display: block; width: 0; margin: 0 auto; border: 3px solid transparent; border-top-color: #333; border-bottom: 0; }
.caret.bar { margin-left: 3px; padding-top: 2px; border-top: 1px solid #333; }
.caret.right::before { border: 3px solid transparent; border-left: 4px solid #333; border-right: 0; }
.sep { width: 1px; height: 16px; margin: 0 1px; background: #c0c0c4; }
h1 { flex: 1; padding-left: 8px; font-size: 11px; font-weight: 400; text-align: center; white-space: nowrap; color: #333; }
.account { gap: 5px; padding-right: 2px; }
.search { width: 154px; height: 18px; padding: 0 3px; background: #fff; border: 1px solid #111; align-self: flex-start; }
.search::placeholder { color: #777; font-style: italic; opacity: 1; }
.login { display: flex; align-items: center; gap: 3px; }
.login svg { width: 14px; height: 14px; }
.progress { width: 50px; height: 7px; margin: 2px 5px 0 1px; border-radius: 3px; align-self: flex-start; background: repeating-linear-gradient(90deg, #2f8f4a 0 3px, #1d5c30 3px 4px) left / 36px 100% no-repeat #555; }
.win.first { margin-left: 12px; }

.tabs { display: flex; align-items: flex-end; height: 21px; flex: none; background: #d4d4d6; }
.tabs button { height: 17px; padding: 0 9px; }
.tabs .wide { padding: 0 11px 0 10px; }
.tabs .file { width: 23px; padding: 0 3px 0 0; color: #f6f6f6; }
.tabs .active { background: #fbfbfd; color: #000; }
.tabs .mini { padding: 0 15px; }
.mini svg { width: 22px; height: 10px; }

.ribbon { display: flex; height: 83px; flex: none; padding-top: 3px; background: #f7f7fb; border-bottom: 1px solid #d4d4cc; }
.group { display: flex; flex-direction: column; padding: 0 2px 0 3px; border-right: 1px solid #d8d8dc; }
.group.assist { padding: 0 5px 0 2px; }
.group.second { padding: 0 2px 0 1px; }
.group.last { border-right: 0; padding: 0 2px; }
.tools { display: flex; }
.tool { display: flex; flex-direction: column; align-items: center; height: 61px; padding: 1px 9px; border: 1px solid transparent; color: #333; }
.tool svg { width: 28px; height: 28px; margin-bottom: 2px; }
.tool.selected { background: #bfe3f7; border-color: #4e9bc4; }
.label { margin-top: 2px; text-align: center; color: #444; }
.hot { position: relative; }
.tooltip { position: absolute; z-index: 5; left: 44px; top: 54px; width: 115px; background: #f8f8fb; border: 1px solid #8c8c90; white-space: nowrap; color: #333; }
.tooltip p { padding: 5px 12px; }
.tooltip .f1 { padding: 5px; margin: 0 1px; border-top: 1px solid #c8c8b8; font-weight: 500; }
.cursor { position: absolute; z-index: 6; left: 43px; top: 40px; width: 11px; height: 16px; }
.options { height: 20px; flex: none; }

.work { display: flex; flex: 1; min-height: 0; }
.props { display: flex; flex-direction: column; width: 190px; flex: none; }
.ptitle { display: flex; align-items: center; justify-content: space-between; height: 16px; flex: none; padding: 0 4px; font-size: 11px; background: #bccddb; }
.ptitle svg { width: 8px; height: 8px; }
.pbody { flex: 1; margin-top: 1px; border-left: 2px solid #8e8e92; border-top: 1px solid #8e8e92; background: #fcfcfe; }
.type { display: flex; align-items: center; width: 186px; height: 63px; padding: 1px 1px 1px 0; background: #f0f0f4; border: 1px solid #dcdcd4; text-align: left; }
.thumb { display: grid; place-items: center; width: 57px; height: 57px; border: 1px solid #dadade; }
.type svg { width: 26px; height: 28px; }
.tname { flex: 1; padding-left: 4px; color: #555; }
.inst { display: flex; align-items: center; gap: 6px; height: 23px; background: #f4f4f8; }
select { appearance: none; background: #e6e6ea; border: 1px solid #c4c4c8; }
.inst select { width: 115px; height: 20px; padding: 0 2px; background: linear-gradient(45deg, transparent 42%, #666 42% 60%, transparent 60%) 99px 7px / 5px 5px no-repeat, linear-gradient(-45deg, transparent 42%, #666 42% 60%, transparent 60%) 103px 7px / 5px 5px no-repeat, #e6e6ea; }
.edit { display: flex; align-items: center; gap: 4px; }
.edit svg { width: 14px; height: 14px; }

.grid { width: 186px; table-layout: fixed; border-collapse: collapse; }
.c1 { width: 88px; }
.c3 { width: 11px; }
.grid tr { height: 17px; }
.grid th, .grid td { height: 17px; padding: 0; font-weight: 400; text-align: left; line-height: 16px; white-space: nowrap; border-bottom: 1px dotted #888; border-right: 1px dotted #888; }
.grid th { padding-left: 8px; }
.grid td { padding-left: 2px; }
.grid td:has(.cell), .grid td:has(.scale) { padding: 0; }
.grid .off { color: #8e8e92; }
.grid .h th { height: 18px; padding: 0 4px 0 1px; line-height: 17px; background: #d9d9dd; border: 0; }
.h span { float: left; }
.h button { float: right; width: 6px; height: 17px; background: linear-gradient(#222, #222); clip-path: polygon(50% 4px, 100% 7px, 100% 8px, 50% 6px, 50% 8px, 100% 11px, 100% 12px, 50% 10px, 0 12px, 0 11px, 50% 8px, 50% 6px, 0 8px, 0 7px); }
.cell, .scale { display: block; width: 100%; height: 16px; line-height: 14px; }
.cell { background: #dcdce0; border: 1px solid #b4b4b8; border-right-color: #888; border-bottom-color: #888; text-align: center; }
.scale { padding-left: 5px; background: #fff; border: 1px solid #222; }
.grid input[type="checkbox"] { appearance: none; display: block; width: 12px; height: 12px; background: #fff; border: 1px solid #333; }
.grid input:disabled { border-color: #ccc; }
.pfoot { display: flex; align-items: center; justify-content: space-between; height: 22px; flex: none; padding: 0 4px 0 1px; border-left: 2px solid #8e8e92; }
.pfoot a { color: #1b74b8; }
.pfoot button { width: 63px; height: 16px; background: #d4d4d8; border: 1px solid #c4c4c8; color: #999; line-height: 14px; }

.view { flex: 1; min-width: 0; display: grid; grid-template: 1fr 16px / 1fr 16px; margin: 1px 4px 2px; border-left: 1px solid #77776f; border-top: 1px solid #77776f; }
.canvas { position: relative; overflow: hidden; background: #fcfcfe; }
.scene { width: 100%; height: 100%; }
.mdi { position: absolute; right: 2px; top: 6px; display: flex; gap: 4px; }
.mdi svg { width: 12px; height: 12px; }
.navbar { position: absolute; right: 0; top: 171px; width: 31px; border: 1px solid #b4b4b4; border-radius: 5px; background: #f6f6f9; }
.navbar svg { width: 29px; height: 99px; }
.vscroll { display: flex; flex-direction: column; align-items: center; justify-content: space-between; padding: 7px 2px 3px 0; background: #f0f0f5; }
.vscroll .thumb { width: 13px; height: 15px; background: #ccccd0; }
.chev { width: 6px; height: 6px; flex: none; border: solid #333; border-width: 1px 0 0 1px; transform: rotate(45deg); }
.chev.down { transform: rotate(225deg); }
.chev.left { transform: rotate(-45deg); margin-left: 4px; }
.chev.rightward { transform: rotate(135deg); }
.vcb { grid-column: 1 / 3; display: flex; align-items: center; background: #f0f0f5; }
.sc { width: 68px; padding-left: 18px; font-family: "Liberation Serif", serif; white-space: nowrap; }
.vicons { display: flex; align-items: center; gap: 4px; }
.vicons svg { width: 14px; height: 14px; }
.hscroll { flex: 1; display: flex; align-items: center; justify-content: space-between; padding: 0 21px 0 427px; }
.hscroll .thumb { width: 14px; height: 13px; background: #ccccd0; }

.browser { width: 224px; flex: none; display: flex; flex-direction: column; padding-right: 1px; }
.browser .ptitle { padding: 0 4px 0 3px; }
.tbody { flex: 1; margin-top: 1px; border: 1px solid #8e8e92; border-right: 0; border-bottom: 0; background: #fcfcfe; }
.tbody ul { position: relative; }
.tbody ul::before { content: ""; position: absolute; top: 0; bottom: 8px; border-left: 1px dotted #aaa; }
.l1::before { left: 6px; }
.l2 { padding-left: 17px; margin-bottom: 2px; }
.l2::before { left: 24px; }
.l3 { padding-left: 17px; margin-bottom: 1px; }
.l3::before { left: 24px; }
.row { display: flex; align-items: center; height: 17px; padding-left: 3px; white-space: nowrap; }
.row svg { width: 14px; height: 14px; }
.row span { padding: 0 3px; }
.row .cur { background: #e8e6ea; }
.l1 > li > .row span { margin-left: 1px; }
.exp { position: relative; width: 8px; height: 8px; flex: none; border: 1px solid #a0a0a8; background: linear-gradient(#446, #446) center / 4px 1px no-repeat #fff; }
.exp.plus { background: linear-gradient(#446, #446) center / 4px 1px no-repeat, linear-gradient(#446, #446) center / 1px 4px no-repeat #fff; }
.dash { width: 5px; margin: 0 1px; flex: none; border-top: 1px dotted #aaa; }
.leaf .dash { width: 9px; margin-left: 5px; }
.l2 .dash { width: 7px; }
.l3 .dash { width: 12px; margin-left: 5px; }

.status { display: flex; align-items: center; height: 17px; flex: none; padding-top: 1px; background: #d0d0d4; border-top: 1px solid #b0b0b4; white-space: nowrap; }
.status p { width: 815px; padding-left: 2px; }
.status svg { width: 14px; height: 14px; }
.sets, .flags { display: flex; align-items: center; }
.sets { flex: 1; }
.sets select { width: 176px; height: 15px; margin: 0 8px; padding: 0 2px; color: #666; border: 0; background: linear-gradient(45deg, transparent 42%, #aaa 42% 60%, transparent 60%) 164px 5px / 5px 5px no-repeat, linear-gradient(-45deg, transparent 42%, #aaa 42% 60%, transparent 60%) 168px 5px / 5px 5px no-repeat, #fafafc; }
.sets span, .flags span { padding-left: 2px; font-weight: 600; }
.sets .gap { margin-left: 20px; }
.sets .gap2 { margin-left: 9px; }
.flags { gap: 8px; padding-right: 56px; }
.flags span { margin-left: -8px; }
```
